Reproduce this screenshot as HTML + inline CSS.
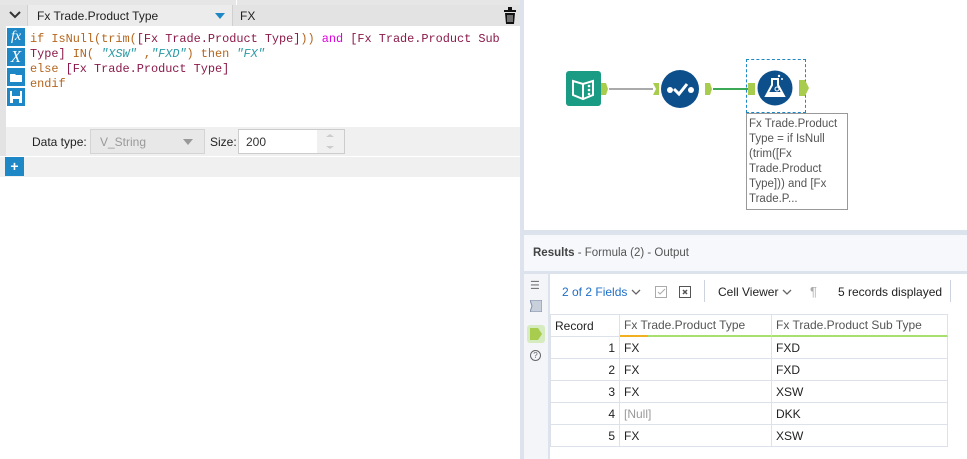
<!DOCTYPE html>
<html><head><meta charset="utf-8"><style>
*{margin:0;padding:0;box-sizing:border-box}
body{width:967px;height:459px;position:relative;overflow:hidden;background:#fff;font-family:"Liberation Sans",sans-serif;font-size:12px;color:#222}
.a{position:absolute}
.code{font-family:"Liberation Mono",monospace;font-size:11.9px;line-height:15px;color:#b5651d;white-space:pre;letter-spacing:-0.02px}
.v{color:#8b1a4a}.k{color:#e000e0}.s{color:#2a9aa6;font-style:italic}
.ic{position:absolute;left:7px;width:18px;height:18px;background:#1e88c7;color:#fff;font-family:"Liberation Serif",serif;font-style:italic;font-size:14px;text-align:center;line-height:18px}
table{border-collapse:separate;border-spacing:0}
td{height:22px;border-right:1px solid #dde2ea;border-bottom:1px solid #dde2ea;padding:0 4px;font-size:12px;color:#222}
</style></head><body>
<div class="a" style="left:0;top:0;width:520px;height:5px;background:#e6e6e6"></div>
<div class="a" style="left:236px;top:0;width:1px;height:5px;background:#fff"></div>
<div class="a" style="left:0;top:5px;width:520px;height:21px;background:#e3e3e3"></div>
<div class="a" style="left:27px;top:5px;width:206px;height:21px;background:#ececec;border-left:1px solid #d0d0d0;border-right:1px solid #d0d0d0"></div>
<svg class="a" style="left:9px;top:11px" width="12" height="8"><path d="M1 1L6 6L11 1" stroke="#333" stroke-width="2" fill="none"/></svg>
<div class="a" style="left:37px;top:9px;color:#222">Fx Trade.Product Type</div>
<svg class="a" style="left:215px;top:13px" width="10" height="6"><path d="M0 0H10L5 6Z" fill="#1e88c7"/></svg>
<div class="a" style="left:240px;top:9px;color:#222">FX</div>
<svg class="a" style="left:503px;top:7px" width="14" height="17"><rect x="1" y="3" width="12" height="2" fill="#111"/><rect x="5" y="0" width="4" height="3" fill="#111"/><path d="M2 6H12L11 17H3Z" fill="#111"/><path d="M5 8V15M7 8V15M9 8V15" stroke="#fff" stroke-width="0.8"/></svg>
<div class="a" style="left:0;top:26px;width:6px;height:130px;background:#e3e3e3"></div>
<div class="a" style="left:25px;top:26px;width:495px;height:101px;background:#fff"></div>
<div class="a" style="left:6px;top:26px;width:20px;height:101px;background:#fff"></div>
<div class="ic" style="top:28px">fx</div>
<div class="ic" style="top:48px;font-size:17px">X</div>
<div class="ic" style="top:68px"><svg width="18" height="18"><path d="M3 6H8L9 7H15V14H3Z" fill="#fff"/></svg></div>
<div class="ic" style="top:88px"><svg width="18" height="18"><rect x="3" y="3" width="12" height="12" fill="#fff"/><rect x="5" y="3" width="8" height="5" fill="#1e88c7"/><rect x="6" y="11" width="6" height="4" fill="#1e88c7"/></svg></div>
<div class="a code" style="left:30px;top:32px">if IsNull(trim(<span class="v">[Fx Trade.Product Type]</span>)) <span class="k">and</span> <span class="v">[Fx Trade.Product Sub</span>
<span class="v">Type]</span> IN( <span class="s">"XSW"</span> ,<span class="s">"FXD"</span>) then <span class="s">"FX"</span>
else <span class="v">[Fx Trade.Product Type]</span>
endif</div>
<div class="a" style="left:6px;top:127px;width:514px;height:29px;background:#f0f0f0"></div>
<div class="a" style="left:32px;top:135px;color:#222">Data type:</div>
<div class="a" style="left:90px;top:129px;width:115px;height:25px;background:#e8e8e8;border:1px solid #d4d4d4;color:#999;padding:5px 9px">V_String</div>
<svg class="a" style="left:183px;top:139px" width="10" height="6"><path d="M0 0H10L5 6Z" fill="#999"/></svg>
<div class="a" style="left:210px;top:135px;color:#222">Size:</div>
<div class="a" style="left:238px;top:129px;width:107px;height:25px;background:#fff;border:1px solid #ccc;padding:5px 7px;color:#333">200</div>
<div class="a" style="left:317px;top:130px;width:27px;height:23px;background:#f0f0f0"></div>
<svg class="a" style="left:324px;top:133px" width="12" height="17"><path d="M2 4L6 1L10 4Z" fill="#ccc"/><path d="M2 13L6 16L10 13Z" fill="#ccc"/></svg>
<div class="a" style="left:0;top:156px;width:520px;height:21px;background:#f0f0f0;border-top:1px solid #fff"></div>
<div class="a" style="left:5px;top:157px;width:19px;height:19px;background:#1e88c7;color:#fff;font-weight:bold;text-align:center;line-height:19px;font-size:14px">+</div>
<div class="a" style="left:520px;top:0;width:4px;height:459px;background:#dde3ec"></div>
<div class="a" style="left:524px;top:230px;width:443px;height:5px;background:#dde3ec"></div>
<div class="a" style="left:566px;top:71px;width:35px;height:35px;background:#1a9b84;border-radius:3px"></div>
<svg class="a" style="left:566px;top:71px" width="35" height="35"><path d="M7 10L17 13L27 10V24L17 28L7 24Z" fill="none" stroke="#fff" stroke-width="2"/><path d="M17 13V28" stroke="#fff" stroke-width="2"/><circle cx="23" cy="15" r="1.3" fill="#fff"/><circle cx="23" cy="19" r="1.3" fill="#fff"/><circle cx="23" cy="23" r="1.3" fill="#fff"/></svg>
<svg class="a" style="left:600px;top:80px" width="170" height="20"><path d="M1 3H6L8 9L6 15H1Z" fill="#a8cc4e"/><path d="M9 9H53" stroke="#aaa" stroke-width="2"/><path d="M53 3H59V15H53L56 9Z" fill="#a8cc4e"/><path d="M105 3H110L112 9L110 15H105Z" fill="#a8cc4e"/><path d="M113 9H148" stroke="#3aa855" stroke-width="2"/><path d="M148 3H155V15H148Z" fill="#a8cc4e"/></svg>
<svg class="a" style="left:660px;top:69px" width="40" height="40"><circle cx="20" cy="20" r="19" fill="#0d4f8b"/><circle cx="10" cy="21" r="3" fill="#fff"/><circle cx="31" cy="21" r="3" fill="#fff"/><path d="M14 20L19 25L27 15" stroke="#fff" stroke-width="3" fill="none"/></svg>
<div class="a" style="left:746px;top:59px;width:60px;height:54px;border:1px dashed #1e88c7"></div>
<svg class="a" style="left:757px;top:70px" width="36" height="36"><circle cx="18" cy="18" r="17.5" fill="#0d4f8b"/><path d="M15 9H21V15L27 26H9L15 15Z" fill="none" stroke="#fff" stroke-width="2"/><path d="M11 22H25L27 26H9Z" fill="#fff"/><circle cx="20" cy="19" r="2" fill="none" stroke="#fff"/><circle cx="22" cy="6" r="1.2" fill="#fff"/><circle cx="25" cy="9" r="1" fill="#fff"/></svg>
<svg class="a" style="left:799px;top:80px" width="12" height="18"><path d="M0 0H6L10 8L6 16H0Z" fill="#a8cc4e"/></svg>
<div class="a" style="left:746px;top:113px;width:102px;height:97px;border:1px solid #999;background:#fff;padding:3px 2px;font-size:11.5px;line-height:15px;color:#555">Fx Trade.Product Type = if IsNull (trim([Fx Trade.Product Type])) and [Fx Trade.P...</div>
<div class="a" style="left:524px;top:235px;width:443px;height:36px;background:#f6f8fb"></div>
<div class="a" style="left:533px;top:247px;font-size:11.5px;color:#555"><b style="color:#444">Results</b> - Formula (2) - Output</div>
<div class="a" style="left:524px;top:271px;width:443px;height:3px;background:#dde3ec"></div>
<div class="a" style="left:524px;top:274px;width:24px;height:185px;background:#f3f5f8"></div>
<div class="a" style="left:548px;top:274px;width:2px;height:185px;background:#dde3ec"></div>
<div class="a" style="left:530px;top:279px;color:#777;font-size:11px">☰</div>
<svg class="a" style="left:530px;top:300px" width="12" height="12"><path d="M0 0H12V12H0L2 6Z" fill="#c8d0dc" stroke="#8090a8"/></svg>
<div class="a" style="left:527px;top:325px;width:18px;height:18px;background:#d6ebc0;border-radius:3px"></div>
<svg class="a" style="left:530px;top:328px" width="12" height="12"><path d="M0 0H8L12 6L8 12H0Z" fill="#a8cc4e"/></svg>
<div class="a" style="left:530px;top:350px;width:11px;height:11px;border:1px solid #666;border-radius:50%;font-size:8px;text-align:center;line-height:9px;color:#666">?</div>
<div class="a" style="left:562px;top:285px;color:#1e6fc8">2 of 2 Fields</div>
<svg class="a" style="left:631px;top:289px" width="10" height="7"><path d="M1 1L5 5L9 1" stroke="#666" stroke-width="1.3" fill="none"/></svg>
<svg class="a" style="left:655px;top:286px" width="12" height="12"><rect x="0.5" y="0.5" width="11" height="11" fill="none" stroke="#aaa"/><path d="M3 6L5 8L10 3" stroke="#aaa" fill="none"/></svg>
<svg class="a" style="left:679px;top:286px" width="12" height="12"><rect x="0.5" y="0.5" width="11" height="11" fill="none" stroke="#555"/><path d="M4 4L8 8M8 4L4 8" stroke="#555" stroke-width="1.5"/></svg>
<div class="a" style="left:704px;top:280px;width:1px;height:22px;background:#cdd3dc"></div>
<div class="a" style="left:718px;top:285px;color:#222">Cell Viewer</div>
<svg class="a" style="left:782px;top:289px" width="10" height="7"><path d="M1 1L5 5L9 1" stroke="#666" stroke-width="1.3" fill="none"/></svg>
<div class="a" style="left:810px;top:284px;color:#aaa;font-size:13px">¶</div>
<div class="a" style="left:838px;top:285px;color:#222">5 records displayed</div>
<div class="a" style="left:950px;top:280px;width:1px;height:22px;background:#cdd3dc"></div>
<table class="a" style="left:550px;top:314px;border-top:1px solid #dde2ea;border-left:1px solid #dde2ea">
<tr><td style="width:69px;color:#222">Record</td><td style="width:152px;color:#555;border-bottom:2px solid #a8e070;position:relative">Fx Trade.Product Type<div class="a" style="left:0;bottom:-2px;width:28px;height:2px;background:#f0b020"></div></td><td style="width:176px;color:#555;border-bottom:2px solid #a8e070">Fx Trade.Product Sub Type</td></tr>
<tr><td style="text-align:right">1</td><td>FX</td><td>FXD</td></tr>
<tr><td style="text-align:right">2</td><td>FX</td><td>FXD</td></tr>
<tr><td style="text-align:right">3</td><td>FX</td><td>XSW</td></tr>
<tr><td style="text-align:right">4</td><td style="color:#999">[Null]</td><td>DKK</td></tr>
<tr><td style="text-align:right">5</td><td>FX</td><td>XSW</td></tr>
</table>
</body></html>
